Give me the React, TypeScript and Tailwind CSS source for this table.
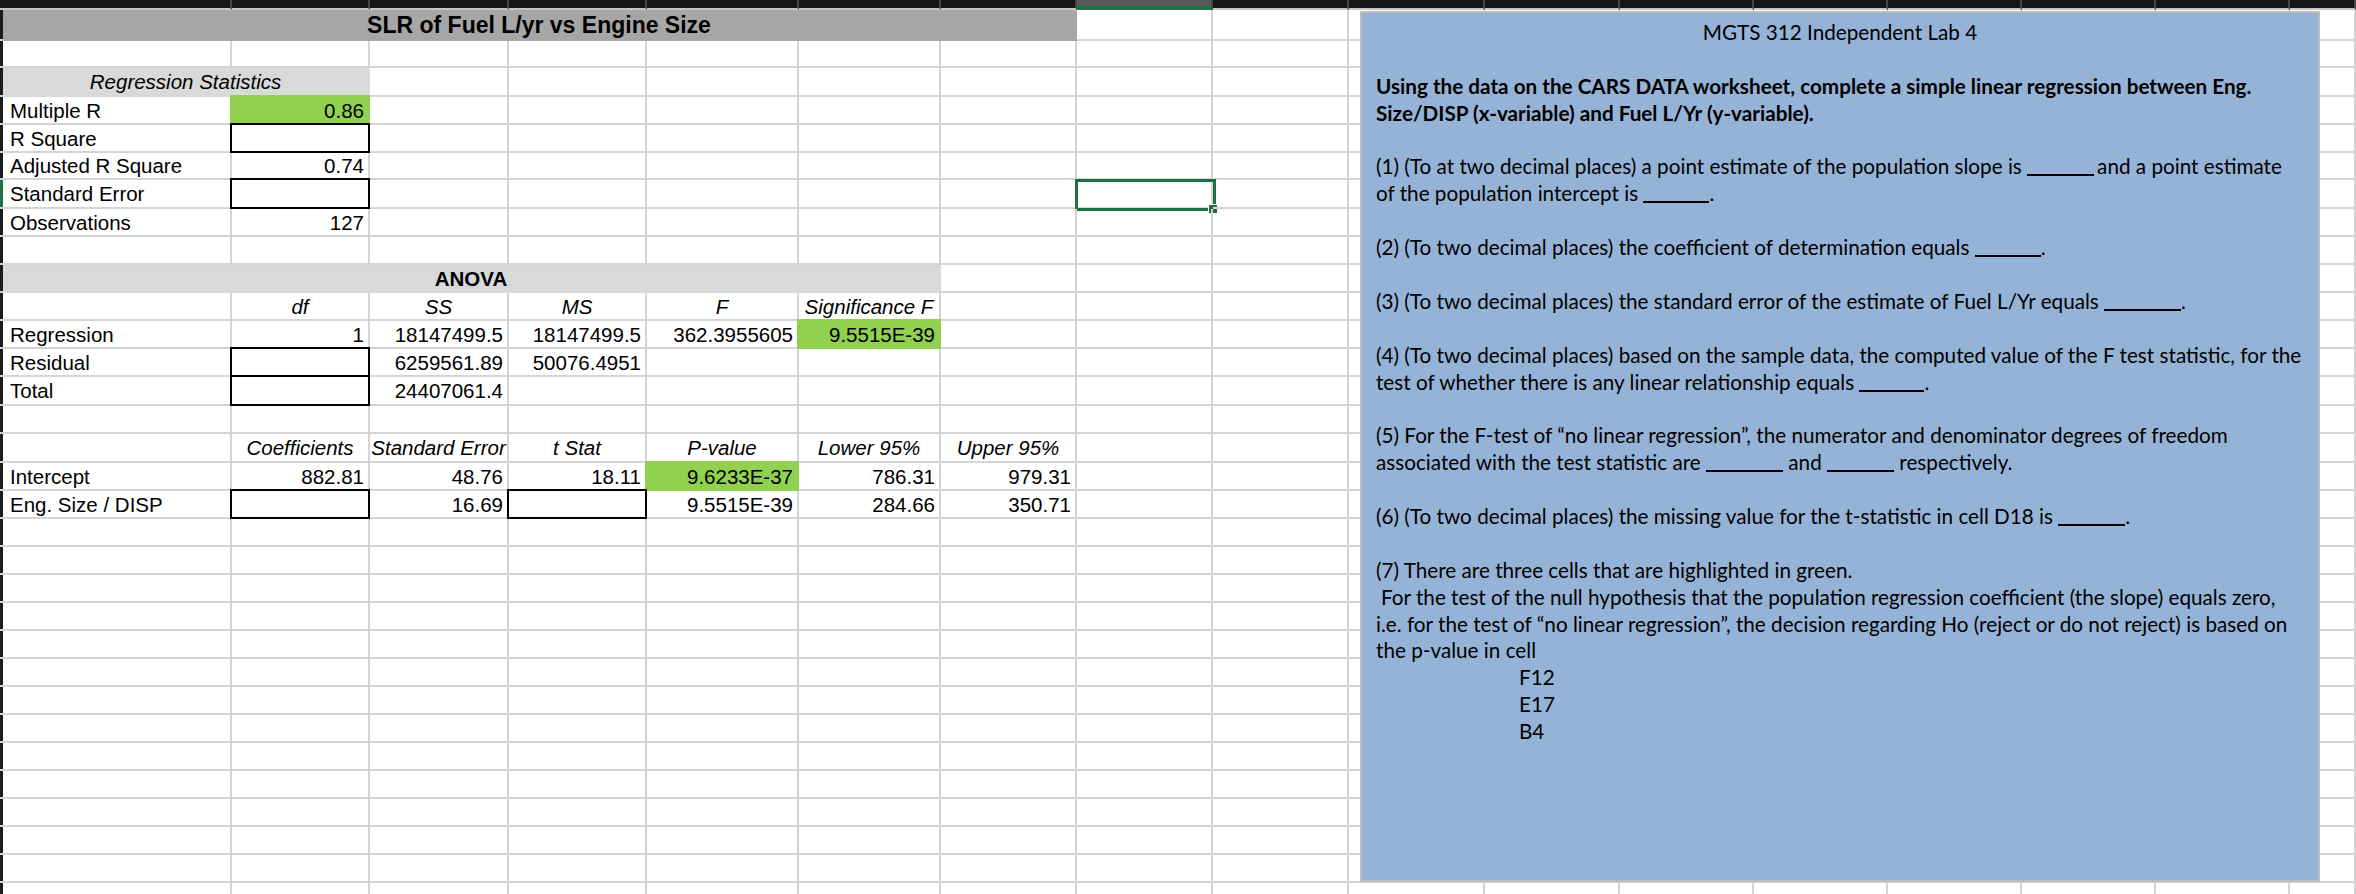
import React from "react";

type Spec = {
  col: number;
  span?: number;
  text?: string;
  align?: "l" | "r" | "c";
  italic?: boolean;
  bold?: boolean;
  fill?: string;
  band?: boolean;
  boxed?: boolean;
  sel?: boolean;
  clip?: boolean;
  title?: boolean;
};

const COLS = [229, 138, 139, 138, 152, 142, 136, 136, 136, 136, 135, 134, 134, 134, 134, 134, 66];
const ROWS = [
  31, 27, 29, 28, 28, 27, 29, 28, 28, 28, 28, 28, 28, 29, 28, 29, 28, 28, 28, 28, 28, 28, 28, 28, 28, 28, 28, 28,
  28, 28, 28, 28,
];

const GREEN = "#92d050";

const lab = (col: number, text: string): Spec => ({ col, text, align: "l" });
const num = (col: number, text: string, fill?: string): Spec => ({ col, text, align: "r", fill });
const hd = (col: number, text: string): Spec => ({ col, text, align: "c", italic: true });
const box = (col: number): Spec => ({ col, boxed: true });

const DATA: Record<number, Spec[]> = {
  1: [{ col: 0, span: 7, text: "SLR of Fuel L/yr vs Engine Size", align: "c", bold: true, fill: "#a6a6a6", band: true, title: true }],
  3: [{ col: 0, span: 2, text: "Regression Statistics", align: "c", italic: true, fill: "#d9d9d9", band: true }],
  4: [lab(0, "Multiple R"), num(1, "0.86", GREEN)],
  5: [lab(0, "R Square"), box(1)],
  6: [lab(0, "Adjusted R Square"), num(1, "0.74")],
  7: [lab(0, "Standard Error"), box(1), { col: 7, sel: true }],
  8: [lab(0, "Observations"), num(1, "127")],
  10: [{ col: 0, span: 6, text: "ANOVA", align: "c", bold: true, fill: "#d9d9d9", band: true }],
  11: [hd(1, "df"), hd(2, "SS"), hd(3, "MS"), hd(4, "F"), hd(5, "Significance F")],
  12: [
    lab(0, "Regression"),
    num(1, "1"),
    num(2, "18147499.5"),
    num(3, "18147499.5"),
    num(4, "362.3955605"),
    num(5, "9.5515E-39", GREEN),
  ],
  13: [lab(0, "Residual"), box(1), num(2, "6259561.89"), num(3, "50076.4951")],
  14: [lab(0, "Total"), box(1), num(2, "24407061.4")],
  16: [
    hd(1, "Coefficients"),
    { col: 2, text: "Standard Error", align: "c", italic: true, clip: true },
    hd(3, "t Stat"),
    hd(4, "P-value"),
    hd(5, "Lower 95%"),
    hd(6, "Upper 95%"),
  ],
  17: [
    lab(0, "Intercept"),
    num(1, "882.81"),
    num(2, "48.76"),
    num(3, "18.11"),
    num(4, "9.6233E-37", GREEN),
    num(5, "786.31"),
    num(6, "979.31"),
  ],
  18: [
    lab(0, "Eng. Size / DISP"),
    box(1),
    num(2, "16.69"),
    box(3),
    num(4, "9.5515E-39"),
    num(5, "284.66"),
    num(6, "350.71"),
  ],
};

function CellView({ w, s }: { w: number; s?: Spec }) {
  const fill = s?.fill;
  const justify = s?.align === "r" ? "justify-end pr-[4px]" : s?.align === "c" ? "justify-center" : "justify-start pl-[7px]";
  const style: React.CSSProperties = { width: w };
  if (fill) {
    style.borderColor = fill;
    style.backgroundColor = fill;
  }
  return (
    <div
      className={`relative shrink-0 h-full flex items-center pt-[2px] border-r-2 border-b-2 border-[#d4d4d4] ${justify} ${
        s?.clip ? "overflow-hidden" : ""
      }`}
      style={style}
    >
      {fill && !s?.band && (
        <div className="absolute -left-[2px] -top-[2px] -right-[2px] -bottom-[2px]" style={{ backgroundColor: fill }} />
      )}
      {s?.boxed && <div className="absolute -left-[2px] -top-[2px] -right-[2px] -bottom-[2px] border-2 border-black" />}
      {s?.text && (
        <span
          className={`relative whitespace-nowrap ${s.title ? "text-[23px] font-bold" : "text-[20.5px]"} ${
            s.bold ? "font-bold" : ""
          } ${s.italic ? "italic" : ""}`}
        >
          {s.text}
        </span>
      )}
      {s?.sel && (
        <>
          <div className="absolute -left-[2px] -top-[1px] -right-[5px] -bottom-[4px] border-[3px] border-[#1e7145]" />
          <div className="absolute -right-[7px] -bottom-[7px] w-[10px] h-[10px] bg-[#1e7145] border border-white" />
        </>
      )}
    </div>
  );
}

function Row({ r, h }: { r: number; h: number }) {
  const specs = DATA[r] ?? [];
  const cells: React.ReactNode[] = [];
  let c = 0;
  while (c < COLS.length) {
    const s = specs.find((x) => x.col === c);
    const span = s?.span ?? 1;
    let w = 0;
    for (let k = c; k < c + span; k++) w += COLS[k];
    cells.push(<CellView key={c} w={w} s={s} />);
    c += span;
  }
  return (
    <div className="flex" style={{ height: h }}>
      <div
        className="w-[3px] shrink-0 h-full border-b-2 border-[#d4d4d4]"
        style={{ backgroundColor: r === 7 ? "#1e7145" : "#1c1c1c" }}
      />
      {cells}
    </div>
  );
}

function HeaderBar() {
  return (
    <div className="flex h-[10px]">
      {COLS.map((w, i) => (
        <div
          key={i}
          className={
            i === 7
              ? "h-full shrink-0 bg-[#5a5a5a] border-b-4 border-b-[#1e7145] border-r-2 border-r-[#474747]"
              : "h-full shrink-0 bg-[#161616] border-b-2 border-b-[#c6c6c6] border-r-2 border-r-[#474747]"
          }
          style={{ width: i === 0 ? w + 3 : w }}
        />
      ))}
    </div>
  );
}

function Blank({ w }: { w: number }) {
  return <span className="relative top-[2px] inline-block h-[1px] border-b-2 border-black" style={{ width: w }} />;
}

function Line({ children, className = "" }: { children?: React.ReactNode; className?: string }) {
  return <div className={`h-[26.9px] whitespace-nowrap ${className}`}>{children}</div>;
}

function TextBox() {
  return (
    <div className="absolute left-[1360px] top-[11px] w-[960px] h-[871px] border-2 border-[#bdbdbd] bg-[#95b3d7] pl-[14px] pr-[14px] pt-[6px] font-['Lato',sans-serif] text-[20.7px] leading-[26.9px] text-black">
      <Line className="text-center">MGTS 312 Independent Lab 4</Line>
      <Line />
      <Line className="font-bold">
        Using the data on the CARS DATA worksheet, complete a simple linear regression between Eng.
      </Line>
      <Line className="font-bold">Size/DISP (x-variable) and Fuel L/Yr (y-variable).</Line>
      <Line />
      <Line>
        (1) (To at two decimal places) a point estimate of the population slope is <Blank w={67} />
        <span className="ml-[3px]">and a point estimate</span>
      </Line>
      <Line>
        of the population intercept is <Blank w={66} />.
      </Line>
      <Line />
      <Line>
        (2) (To two decimal places) the coefficient of determination equals <Blank w={66} />.
      </Line>
      <Line />
      <Line>
        (3) (To two decimal places) the standard error of the estimate of Fuel L/Yr equals <Blank w={77} />.
      </Line>
      <Line />
      <Line>
        (4) (To two decimal places) based on the sample data, the computed value of the F test statistic, for the
      </Line>
      <Line>
        test of whether there is any linear relationship equals <Blank w={65} />.
      </Line>
      <Line />
      <Line>(5) For the F-test of “no linear regression”, the numerator and denominator degrees of freedom</Line>
      <Line>
        associated with the test statistic are <Blank w={77} /> and <Blank w={67} /> respectively.
      </Line>
      <Line />
      <Line>
        (6) (To two decimal places) the missing value for the t-statistic in cell D18 is <Blank w={67} />.
      </Line>
      <Line />
      <Line>(7) There are three cells that are highlighted in green.</Line>
      <Line className="pl-[5px]">
        For the test of the null hypothesis that the population regression coefficient (the slope) equals zero,
      </Line>
      <Line>
        i.e. for the test of “no linear regression”, the decision regarding Ho (reject or do not reject) is based on
      </Line>
      <Line>the p-value in cell</Line>
      <Line className="pl-[143px]">F12</Line>
      <Line className="pl-[143px]">E17</Line>
      <Line className="pl-[143px]">B4</Line>
    </div>
  );
}

export default function App() {
  return (
    <div className="relative w-[2356px] h-[894px] overflow-hidden bg-white font-['Liberation_Sans',Arial,sans-serif] text-black">
      <HeaderBar />
      {ROWS.map((h, i) => (
        <Row key={i} r={i + 1} h={h} />
      ))}
      <TextBox />
    </div>
  );
}
